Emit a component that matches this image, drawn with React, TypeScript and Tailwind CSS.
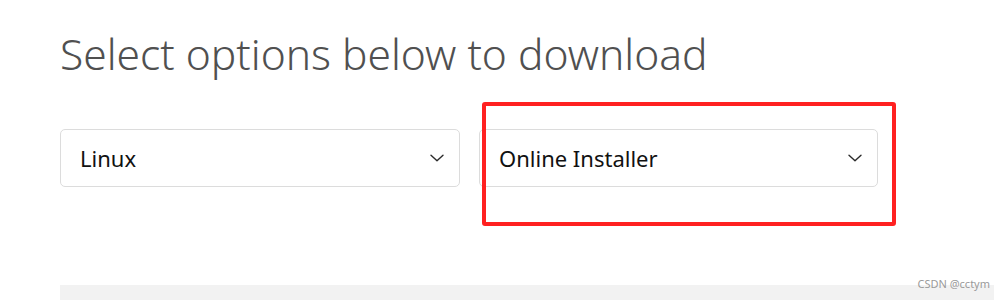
import React from "react";

function Chevron() {
  return (
    <svg width="14" height="8" viewBox="0 0 14 8" fill="none" className="shrink-0">
      <path d="M1 1.2l6 5.6 6-5.6" stroke="#2b2b2b" strokeWidth="1.4" strokeLinecap="round" strokeLinejoin="round" />
    </svg>
  );
}

function SelectBox({ label, className }: { label: string; className?: string }) {
  return (
    <div
      className={
        "flex h-[58px] items-center justify-between rounded-[5px] border border-[#dcdcdc] bg-white pl-[19px] pr-[15px] " +
        (className ?? "")
      }
    >
      <span className="text-[22px] leading-none text-[#111]">{label}</span>
      <Chevron />
    </div>
  );
}

export default function App() {
  return (
    <div
      className="relative h-[300px] w-[994px] overflow-hidden bg-white"
      style={{ fontFamily: '"Noto Sans", "Open Sans", sans-serif' }}
    >
      <div className="pl-[60px] pt-[28px]">
        <h1 className="text-[42.5px] font-light leading-[52px] text-[#505050]">
          Select options below to download
        </h1>
        <div className="mt-[49px] flex gap-[19px]">
          <SelectBox label="Linux" className="w-[400px]" />
          <div className="relative">
            <SelectBox label="Online Installer" className="w-[399px]" />
            {/* red annotation frame */}
            <div className="pointer-events-none absolute left-[3px] top-[-27px] h-[124px] w-[414px] rounded-[3px] border-[4px] border-[#ff2121]" />
          </div>
        </div>
        <div className="mt-[98px] h-[20px] bg-[#f2f2f2]" />
      </div>
      <span className="absolute right-[4px] top-[276px] text-[11px] text-[#9a9a9a]">CSDN @cctym</span>
    </div>
  );
}
